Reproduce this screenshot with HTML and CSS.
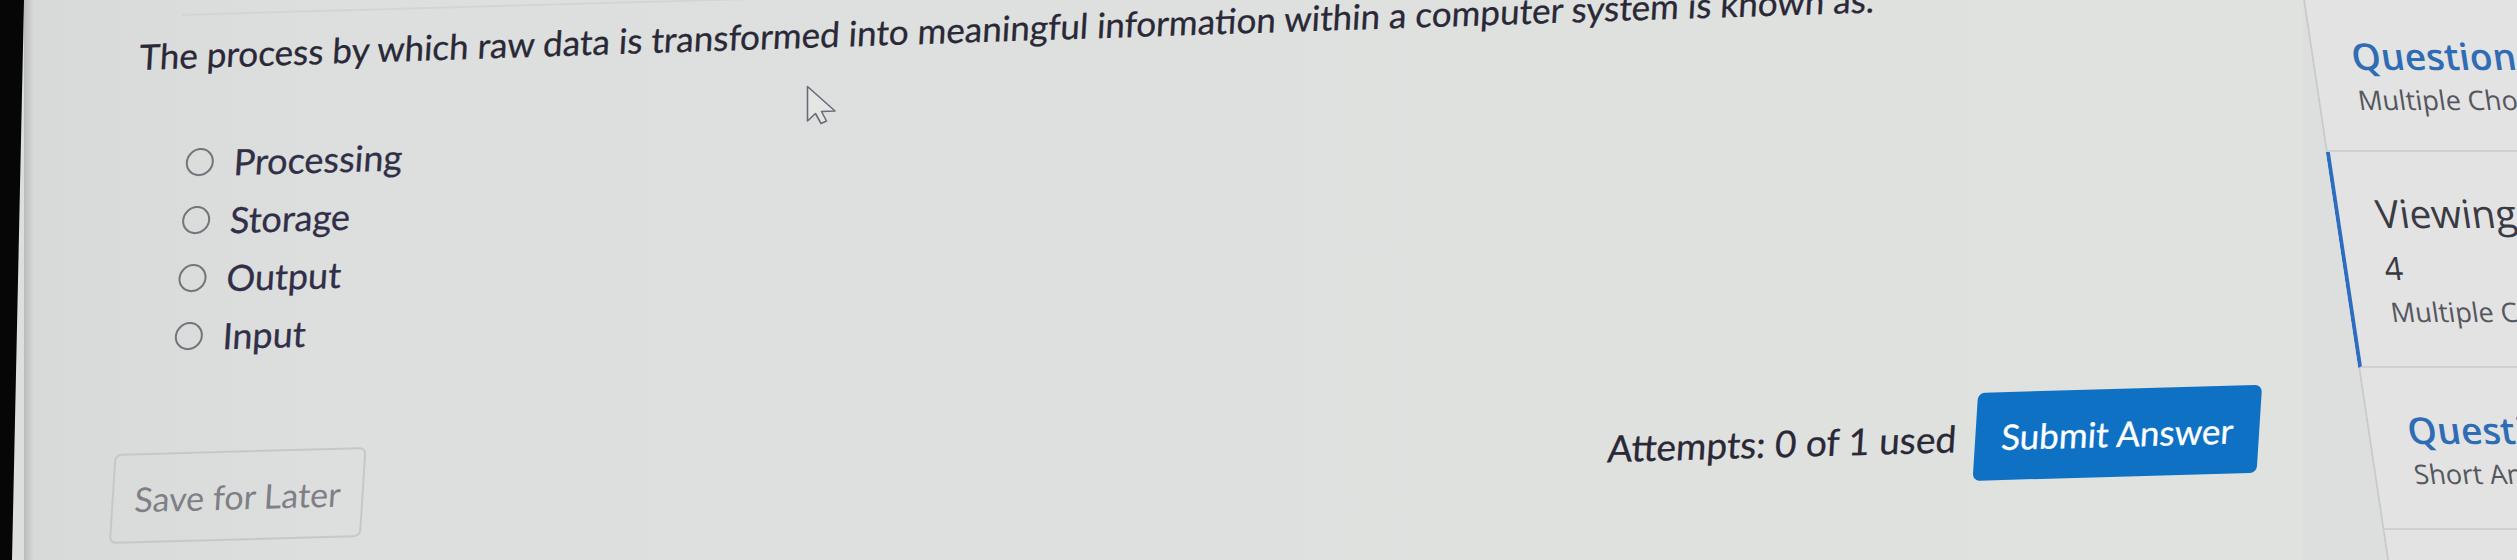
FILE: index.html
```html
<!DOCTYPE html>
<html lang="en">
<head>
<meta charset="utf-8">
<title>Quiz</title>
<link rel="stylesheet" href="styles.css">
</head>
<body>
<div class="screen">
  <div class="bezel"></div>
  <main class="quiz">
    <div class="quiz-inner">
      <div class="topline"></div>
      <p class="question">The process by which raw data is transformed into meaningful information within a computer system is known as:</p>
      <ul class="answers">
        <li class="answer"><span class="radio"></span><span class="label">Processing</span></li>
        <li class="answer"><span class="radio"></span><span class="label">Storage</span></li>
        <li class="answer"><span class="radio"></span><span class="label">Output</span></li>
        <li class="answer"><span class="radio"></span><span class="label">Input</span></li>
      </ul>
      <div class="footer">
        <button class="btn-save" type="button">Save for Later</button>
        <div class="submit-group">
          <span class="attempts">Attempts: 0 of 1 used</span>
          <button class="btn-submit" type="button">Submit Answer</button>
        </div>
      </div>
    </div>
    <svg class="cursor" width="32" height="40" viewBox="0 0 32 40" aria-hidden="true">
      <path d="M1.5 1.5 L1.5 36 L9.5 28.5 L15 38.5 L20.5 36 L15.5 26.5 L29 26 Z" fill="#e4e6e4" stroke="#6c6b7a" stroke-width="1.6" stroke-linejoin="round"/>
    </svg>
  </main>
  <aside class="sidebar">
    <div class="nav-item">
      <div class="nav-title">Question 3</div>
      <div class="nav-sub">Multiple Choice</div>
    </div>
    <div class="nav-item active">
      <div class="nav-view">Viewing</div>
      <div class="nav-num">4</div>
      <div class="nav-sub">Multiple Choice</div>
    </div>
    <div class="nav-item last">
      <div class="nav-title">Question 5</div>
      <div class="nav-sub">Short Answer</div>
    </div>
    <div class="nav-item rest"></div>
  </aside>
</div>
</body>
</html>
```

FILE: styles.css
```css
html, body {
  margin: 0;
  padding: 0;
}

body {
  width: 2517px;
  height: 560px;
  overflow: hidden;
  background: #dcdfdd;
  font-family: Lato, "Open Sans", "Liberation Sans", sans-serif;
}

.screen {
  display: flex;
  height: 560px;
  overflow: hidden;
}

.bezel {
  flex: none;
  width: 24px;
  background: #060606;
  clip-path: polygon(0 0, 100% 0, 50% 100%, 0 100%);
}

.quiz {
  flex: 1;
  position: relative;
  overflow: hidden;
  background: linear-gradient(to right, #b9bcba 0, #d7dad8 10px, #dcdfdd 300px, #e0e2e0 100%);
}

.quiz-inner {
  padding: 0 16px 0 116px;
  transform: matrix(1, -0.028, -0.063, 1, 0, 0);
  transform-origin: 116px 50px;
}

.topline {
  height: 1px;
  margin: 0 0 0 40px;
  padding-top: 14px;
  border-bottom: 2px solid #d2d5d3;
}

.question {
  margin: 18px 0 0;
  font-size: 35px;
  line-height: 42px;
  color: #2a2837;
  -webkit-text-stroke: 0.3px #2a2837;
  white-space: nowrap;
  transform: rotate(-0.3deg);
  transform-origin: 0 50%;
}

.answers {
  list-style: none;
  margin: 58px 0 0;
  padding: 0 0 0 53px;
}

.answer {
  display: flex;
  align-items: center;
  gap: 20px;
  height: 58px;
  font-size: 36px;
  color: #312e48;
  -webkit-text-stroke: 0.3px #312e48;
}

.radio {
  flex: none;
  box-sizing: border-box;
  width: 28px;
  height: 28px;
  border: 2.5px solid #74747c;
  border-radius: 50%;
}

.footer {
  display: flex;
  justify-content: space-between;
  align-items: flex-start;
  margin-top: 78px;
}

.btn-save {
  margin-top: 9px;
  width: 252px;
  height: 90px;
  padding: 0;
  border: 2px solid #c6c8c7;
  border-radius: 7px;
  background: transparent;
  font-family: Lato, sans-serif;
  font-size: 34px;
  color: #7f7f87;
}

.submit-group {
  display: flex;
  align-items: center;
  gap: 19px;
}

.attempts {
  font-size: 37px;
  color: #2a2837;
  -webkit-text-stroke: 0.3px #2a2837;
}

.btn-submit {
  width: 284px;
  height: 88px;
  padding: 0;
  border: none;
  border-radius: 7px;
  background: #0f71c4;
  font-family: Lato, sans-serif;
  font-size: 35px;
  color: #ffffff;
  -webkit-text-stroke: 0.3px #ffffff;
}

.cursor {
  position: absolute;
  left: 782px;
  top: 85px;
}

.sidebar {
  flex: none;
  width: 214px;
  height: 560px;
  overflow: hidden;
  background: #e2e3e2;
  font-family: "Open Sans", "Liberation Sans", sans-serif;
  transform: matrix(1, 0, 0.15, 1, 0, 0);
  transform-origin: 0 0;
}

.nav-item {
  box-sizing: border-box;
  border-left: 2px solid #c9cac9;
  border-bottom: 2px solid #cfd0cf;
  padding-left: 38px;
  white-space: nowrap;
  overflow: hidden;
}

.nav-item:first-child {
  height: 152px;
  padding-top: 34px;
}

.nav-item.active {
  height: 216px;
  padding-top: 37px;
  padding-left: 37px;
  border-left: 4px solid #2c6cc1;
}

.nav-item.last {
  height: 162px;
  padding-top: 40px;
}

.nav-item.rest {
  height: 30px;
  border-bottom: none;
}

.nav-title {
  font-size: 37px;
  line-height: 44px;
  font-weight: 600;
  letter-spacing: 0.2px;
  color: #2f6cb4;
}

.nav-sub {
  font-size: 27px;
  line-height: 44px;
  color: #55565e;
}

.nav-view {
  font-size: 39px;
  line-height: 48px;
  color: #3a3a44;
}

.nav-num {
  margin-top: 7px;
  font-size: 32px;
  line-height: 48px;
  color: #3a3a44;
}

.active .nav-sub {
  line-height: 40px;
}
```
